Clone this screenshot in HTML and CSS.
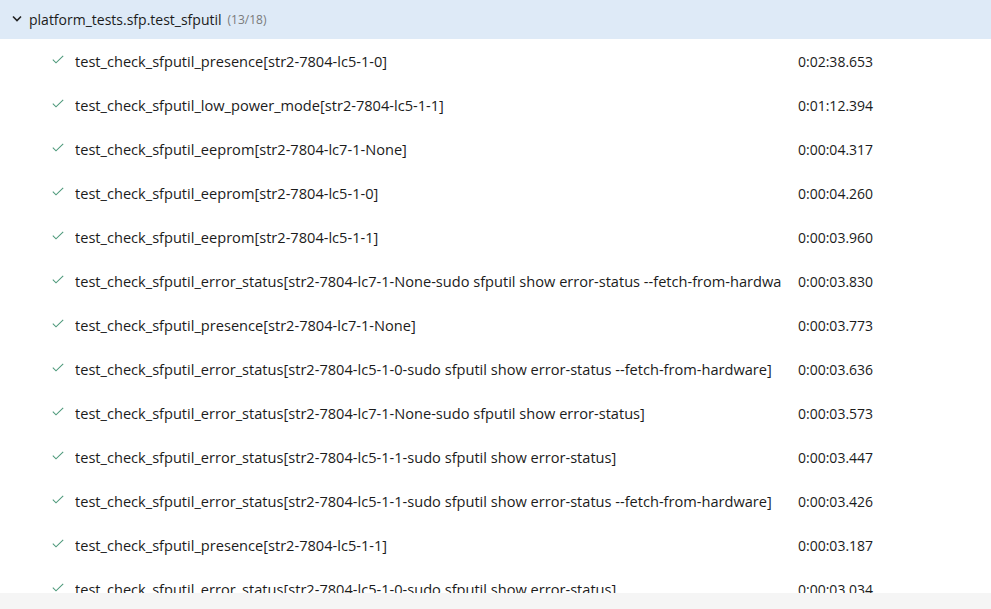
FILE: index.html
```html
<!DOCTYPE html>
<html>
<head>
<meta charset="utf-8">
<link rel="stylesheet" href="styles.css">
</head>
<body>
<div class="page">
  <div class="group-header">
    <svg class="chevron" width="10" height="7" viewBox="0 0 10 7"><path d="M1 1.5 L5 5.5 L9 1.5" fill="none" stroke="#222" stroke-width="1.6"/></svg>
    <span class="group-name">platform_tests.sfp.test_sfputil</span>
    <span class="group-count">(13/18)</span>
  </div>
  <div class="rows">
    <div class="row"><svg class="check" viewBox="0 0 12 9"><path d="M0.8 4.6 L4 7.8 L11.2 0.8" fill="none" stroke="#4f9a7c" stroke-width="1.1"/></svg><span class="name">test_check_sfputil_presence[str2-7804-lc5-1-0]</span><span class="dur">0:02:38.653</span></div>
    <div class="row"><svg class="check" viewBox="0 0 12 9"><path d="M0.8 4.6 L4 7.8 L11.2 0.8" fill="none" stroke="#4f9a7c" stroke-width="1.1"/></svg><span class="name">test_check_sfputil_low_power_mode[str2-7804-lc5-1-1]</span><span class="dur">0:01:12.394</span></div>
    <div class="row"><svg class="check" viewBox="0 0 12 9"><path d="M0.8 4.6 L4 7.8 L11.2 0.8" fill="none" stroke="#4f9a7c" stroke-width="1.1"/></svg><span class="name">test_check_sfputil_eeprom[str2-7804-lc7-1-None]</span><span class="dur">0:00:04.317</span></div>
    <div class="row"><svg class="check" viewBox="0 0 12 9"><path d="M0.8 4.6 L4 7.8 L11.2 0.8" fill="none" stroke="#4f9a7c" stroke-width="1.1"/></svg><span class="name">test_check_sfputil_eeprom[str2-7804-lc5-1-0]</span><span class="dur">0:00:04.260</span></div>
    <div class="row"><svg class="check" viewBox="0 0 12 9"><path d="M0.8 4.6 L4 7.8 L11.2 0.8" fill="none" stroke="#4f9a7c" stroke-width="1.1"/></svg><span class="name">test_check_sfputil_eeprom[str2-7804-lc5-1-1]</span><span class="dur">0:00:03.960</span></div>
    <div class="row"><svg class="check" viewBox="0 0 12 9"><path d="M0.8 4.6 L4 7.8 L11.2 0.8" fill="none" stroke="#4f9a7c" stroke-width="1.1"/></svg><span class="name">test_check_sfputil_error_status[str2-7804-lc7-1-None-sudo sfputil show error-status --fetch-from-hardware]</span><span class="dur">0:00:03.830</span></div>
    <div class="row"><svg class="check" viewBox="0 0 12 9"><path d="M0.8 4.6 L4 7.8 L11.2 0.8" fill="none" stroke="#4f9a7c" stroke-width="1.1"/></svg><span class="name">test_check_sfputil_presence[str2-7804-lc7-1-None]</span><span class="dur">0:00:03.773</span></div>
    <div class="row"><svg class="check" viewBox="0 0 12 9"><path d="M0.8 4.6 L4 7.8 L11.2 0.8" fill="none" stroke="#4f9a7c" stroke-width="1.1"/></svg><span class="name">test_check_sfputil_error_status[str2-7804-lc5-1-0-sudo sfputil show error-status --fetch-from-hardware]</span><span class="dur">0:00:03.636</span></div>
    <div class="row"><svg class="check" viewBox="0 0 12 9"><path d="M0.8 4.6 L4 7.8 L11.2 0.8" fill="none" stroke="#4f9a7c" stroke-width="1.1"/></svg><span class="name">test_check_sfputil_error_status[str2-7804-lc7-1-None-sudo sfputil show error-status]</span><span class="dur">0:00:03.573</span></div>
    <div class="row"><svg class="check" viewBox="0 0 12 9"><path d="M0.8 4.6 L4 7.8 L11.2 0.8" fill="none" stroke="#4f9a7c" stroke-width="1.1"/></svg><span class="name">test_check_sfputil_error_status[str2-7804-lc5-1-1-sudo sfputil show error-status]</span><span class="dur">0:00:03.447</span></div>
    <div class="row"><svg class="check" viewBox="0 0 12 9"><path d="M0.8 4.6 L4 7.8 L11.2 0.8" fill="none" stroke="#4f9a7c" stroke-width="1.1"/></svg><span class="name">test_check_sfputil_error_status[str2-7804-lc5-1-1-sudo sfputil show error-status --fetch-from-hardware]</span><span class="dur">0:00:03.426</span></div>
    <div class="row"><svg class="check" viewBox="0 0 12 9"><path d="M0.8 4.6 L4 7.8 L11.2 0.8" fill="none" stroke="#4f9a7c" stroke-width="1.1"/></svg><span class="name">test_check_sfputil_presence[str2-7804-lc5-1-1]</span><span class="dur">0:00:03.187</span></div>
    <div class="row"><svg class="check" viewBox="0 0 12 9"><path d="M0.8 4.6 L4 7.8 L11.2 0.8" fill="none" stroke="#4f9a7c" stroke-width="1.1"/></svg><span class="name">test_check_sfputil_error_status[str2-7804-lc5-1-0-sudo sfputil show error-status]</span><span class="dur">0:00:03.034</span></div>
  </div>
</div>
<div class="footer-bar"></div>
</body>
</html>
```
FILE: styles.css
```css
html, body {
  margin: 0;
  padding: 0;
  background: #ffffff;
  overflow: hidden;
  height: 609px;
}
body {
  font-family: "Open Sans", "Noto Sans", sans-serif;
  color: #1b1b1b;
  position: relative;
}
.page {
  height: 593px;
  overflow: hidden;
}
.group-header {
  height: 39px;
  background: #deeaf7;
  display: flex;
  align-items: center;
  padding-left: 12px;
}
.chevron {
  width: 10px;
  height: 7px;
  margin-right: 7px;
  margin-top: -2px;
}
.group-name {
  font-size: 14px;
}
.group-count {
  font-size: 12px;
  color: #7a7a7a;
  margin-left: 6px;
}
.row {
  height: 44px;
  display: flex;
  align-items: center;
  padding-left: 52px;
  font-size: 14px;
}
.check {
  width: 12px;
  height: 9px;
  margin-right: 11px;
  margin-top: -4px;
}
.name {
  width: 706px;
  white-space: nowrap;
  overflow: hidden;
  font-size: 14.6px;
}
.dur {
  margin-left: 17px;
}
.footer-bar {
  height: 16px;
  background: #f5f5f5;
}
```
